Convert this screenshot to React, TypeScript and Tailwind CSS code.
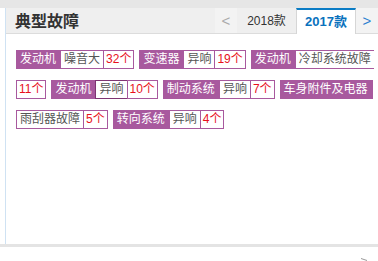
import React from 'react';

type Seg = { text: string; kind: 'label' | 'plain' | 'count'; hot?: boolean };

const tags: Seg[][] = [
  [{ text: '发动机', kind: 'label' }, { text: '噪音大', kind: 'plain' }, { text: '32个', kind: 'count' }],
  [{ text: '变速器', kind: 'label' }, { text: '异响', kind: 'plain' }, { text: '19个', kind: 'count' }],
  [{ text: '发动机', kind: 'label' }, { text: '冷却系统故障', kind: 'plain' }, { text: '11个', kind: 'count' }],
  [{ text: '发动机', kind: 'label' }, { text: '异响', kind: 'plain', hot: true }, { text: '10个', kind: 'count' }],
  [{ text: '制动系统', kind: 'label' }, { text: '异响', kind: 'plain' }, { text: '7个', kind: 'count' }],
  [{ text: '车身附件及电器', kind: 'label' }],
  [{ text: '雨刮器故障', kind: 'plain' }, { text: '5个', kind: 'count' }],
  [{ text: '转向系统', kind: 'label' }, { text: '异响', kind: 'plain' }, { text: '4个', kind: 'count' }],
];

const segClass = (s: Seg) => {
  if (s.kind === 'label') return 'bg-[#a8599e] text-white border-[#a8599e] pl-[3px] pr-[4px]';
  if (s.kind === 'count') return 'bg-white text-[#e8111c] border-[#a8599e] px-[2px]';
  return s.hot
    ? 'bg-white text-[#555] border-[#7e3473] px-[3px]'
    : 'bg-white text-[#555] border-[#a8599e] px-[3px]';
};

const App: React.FC = () => {
  // flatten so a tag may wrap between its parts, like inline text
  const parts: { seg: Seg; last: boolean; key: string }[] = [];
  tags.forEach((t, i) =>
    t.forEach((seg, j) => parts.push({ seg, last: j === t.length - 1, key: `${i}-${j}` }))
  );

  return (
    <div
      className="w-[378px] h-[261px] bg-white overflow-hidden flex flex-col"
      style={{ fontFamily: '"Liberation Sans", "Noto Sans CJK SC", sans-serif' }}
    >
      <div className="h-2 bg-[#e6e6e6] shrink-0" />

      <div className="ml-[5px] border-l border-[#cfe2f3] h-[236px] shrink-0 flex flex-col">
        <div className="h-[26px] bg-[#efefef] border-b border-[#dcdcdc] flex items-stretch justify-between">
          <span className="pl-[9px] pt-[3px] text-[16px] font-bold text-[#333] leading-[22px]">典型故障</span>
          <div className="flex items-stretch">
            <button className="w-[22px] bg-[#f3f3f3] text-[#aaa] text-[15px] leading-none flex items-center justify-center">&lt;</button>
            <button className="w-[59px] text-[12px] text-[#333] flex items-center justify-center pt-[1px]">2018款</button>
            <button className="w-[60px] h-[26px] bg-white border-t-2 border-t-[#0a7cc5] border-x border-x-[#d6d6d6] text-[13px] font-bold text-[#0a72bd] flex items-center justify-center">2017款</button>
            <button className="w-[22px] bg-[#f3f3f3] text-[#2a80d0] text-[15px] leading-none flex items-center justify-center">&gt;</button>
          </div>
        </div>

        <div className="w-[380px] flex flex-wrap gap-y-[11px] pl-[10px] pt-[16px]">
          {parts.map(({ seg, last, key }) => (
            <span
              key={key}
              className={`h-[19px] text-[12px] leading-[17px] whitespace-nowrap border-y border-l ${
                last ? 'border-r mr-[5px]' : ''
              } ${segClass(seg)}`}
            >
              {seg.text}
            </span>
          ))}
        </div>
      </div>

      <div className="h-[3px] bg-[#e4e4e4] shrink-0" />
      <div className="flex-1 relative">
        <svg className="absolute right-[11px] bottom-0" width="6" height="3" viewBox="0 0 6 3">
          <path d="M0 0.5 L6 2.5" stroke="#9a9a9a" strokeWidth="1" />
        </svg>
      </div>
    </div>
  );
};

export default App;
